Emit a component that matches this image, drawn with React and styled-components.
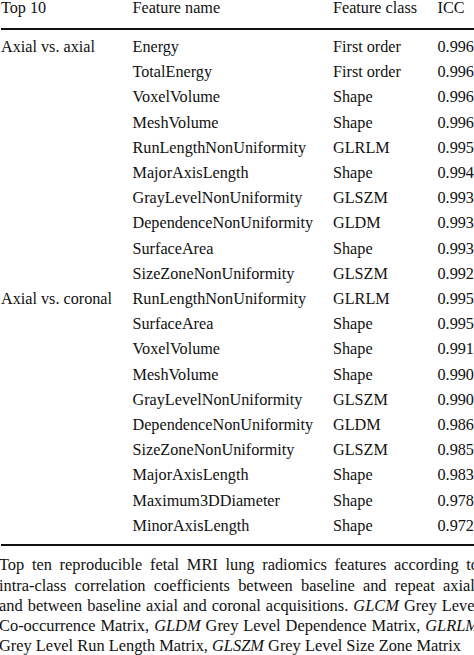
import React from 'react';
import styled, { createGlobalStyle } from 'styled-components';

const GlobalStyle = createGlobalStyle`
  html, body {
    margin: 0;
    padding: 0;
    background: #fff;
    overflow: hidden;
  }
  body {
    font-family: "Liberation Serif", "Times New Roman", serif;
    color: #111;
  }
`;

const Page = styled.div`
  width: 474px;
  height: 655px;
  overflow: hidden;
  padding-left: 1px;
  box-sizing: border-box;
`;

const Inner = styled.div`
  margin-top: -1.5px;
  font-size: 16.2px;
`;

const columns = '131.5px 200.5px 104.5px 1fr';

const HeaderRow = styled.div`
  display: grid;
  grid-template-columns: ${columns};
  line-height: 18px;
  padding-bottom: 11.5px;
  border-bottom: 2px solid #111;
  white-space: nowrap;
`;

const Body = styled.div`
  padding: 4.9px 0 5.1px;
  border-bottom: 2px solid #111;
`;

const Row = styled.div`
  display: grid;
  grid-template-columns: ${columns};
  line-height: 25.2px;
  white-space: nowrap;
`;

const Cell = styled.div`
  overflow: visible;
`;

const Caption = styled.div`
  margin: 9.3px 0 0 -2px;
  width: 480px;
  font-size: 16.4px;
  line-height: 20.25px;
`;

const CaptionLine = styled.span`
  display: block;
  white-space: nowrap;
  text-align: ${(props) => (props.last ? 'left' : 'justify')};
  text-align-last: ${(props) => (props.last ? 'left' : 'justify')};
`;

const groups = [
  {
    label: 'Axial vs. axial',
    rows: [
      ['Energy', 'First order', '0.996'],
      ['TotalEnergy', 'First order', '0.996'],
      ['VoxelVolume', 'Shape', '0.996'],
      ['MeshVolume', 'Shape', '0.996'],
      ['RunLengthNonUniformity', 'GLRLM', '0.995'],
      ['MajorAxisLength', 'Shape', '0.994'],
      ['GrayLevelNonUniformity', 'GLSZM', '0.993'],
      ['DependenceNonUniformity', 'GLDM', '0.993'],
      ['SurfaceArea', 'Shape', '0.993'],
      ['SizeZoneNonUniformity', 'GLSZM', '0.992'],
    ],
  },
  {
    label: 'Axial vs. coronal',
    rows: [
      ['RunLengthNonUniformity', 'GLRLM', '0.995'],
      ['SurfaceArea', 'Shape', '0.995'],
      ['VoxelVolume', 'Shape', '0.991'],
      ['MeshVolume', 'Shape', '0.990'],
      ['GrayLevelNonUniformity', 'GLSZM', '0.990'],
      ['DependenceNonUniformity', 'GLDM', '0.986'],
      ['SizeZoneNonUniformity', 'GLSZM', '0.985'],
      ['MajorAxisLength', 'Shape', '0.983'],
      ['Maximum3DDiameter', 'Shape', '0.978'],
      ['MinorAxisLength', 'Shape', '0.972'],
    ],
  },
];

const App = () => (
  <Page>
    <GlobalStyle />
    <Inner>
      <HeaderRow>
        <Cell>Top 10</Cell>
        <Cell>Feature name</Cell>
        <Cell>Feature class</Cell>
        <Cell>ICC</Cell>
      </HeaderRow>
      <Body>
        {groups.map((group) =>
          group.rows.map(([name, cls, icc], i) => (
            <Row key={group.label + i}>
              <Cell>{i === 0 ? group.label : ''}</Cell>
              <Cell>{name}</Cell>
              <Cell>{cls}</Cell>
              <Cell>{icc}</Cell>
            </Row>
          ))
        )}
      </Body>
      <Caption>
        <CaptionLine>
          Top ten reproducible fetal MRI lung radiomics features according to
        </CaptionLine>
        <CaptionLine>
          intra-class correlation coefficients between baseline and repeat axial,
        </CaptionLine>
        <CaptionLine>
          and between baseline axial and coronal acquisitions. <i>GLCM</i> Grey Level
        </CaptionLine>
        <CaptionLine>
          Co-occurrence Matrix, <i>GLDM</i> Grey Level Dependence Matrix, <i>GLRLM</i>
        </CaptionLine>
        <CaptionLine last>
          Grey Level Run Length Matrix, <i>GLSZM</i> Grey Level Size Zone Matrix
        </CaptionLine>
      </Caption>
    </Inner>
  </Page>
);

export default App;
